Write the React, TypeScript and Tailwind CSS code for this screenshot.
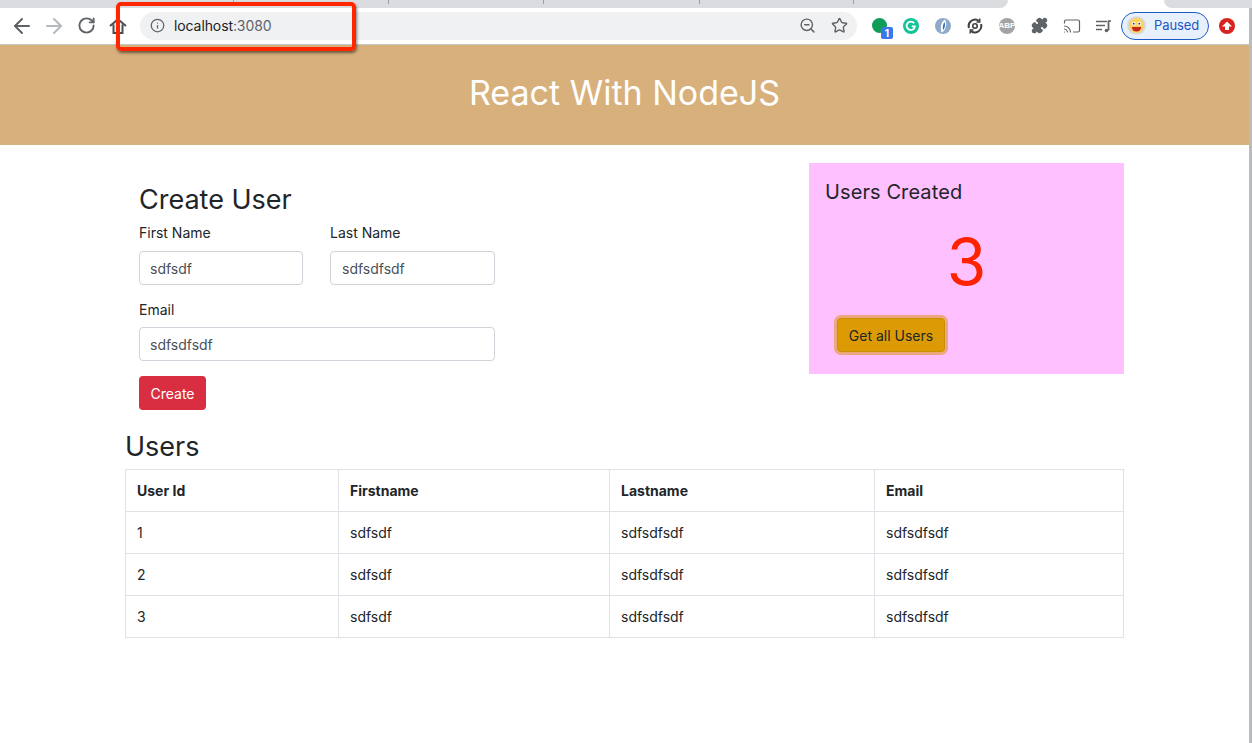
import { ArrowLeft, ArrowRight, Cast, Info, Puzzle, RotateCw, Star, ZoomOut } from 'lucide-react';

const USERS = [
  { id: 1, first: 'sdfsdf', last: 'sdfsdfsdf', email: 'sdfsdfsdf' },
  { id: 2, first: 'sdfsdf', last: 'sdfsdfsdf', email: 'sdfsdfsdf' },
  { id: 3, first: 'sdfsdf', last: 'sdfsdfsdf', email: 'sdfsdfsdf' },
];

function TabStrip() {
  return (
    <div className="flex h-[8px] bg-white">
      <div className="flex h-full w-[1008px] items-start rounded-br-lg bg-[#dadce0]">
        <div className="h-[4px] w-[234px] border-r border-[#9aa0a6]" />
        <div className="h-[4px] w-[155px] border-r border-[#9aa0a6]" />
        <div className="h-[4px] w-[155px] border-r border-[#9aa0a6]" />
        <div className="h-[4px] w-[156px] border-r border-[#9aa0a6]" />
        <div className="h-[4px] w-[154px] border-r border-[#9aa0a6]" />
      </div>
      <div className="w-[156px]" />
      <div className="flex-1 rounded-bl-lg bg-[#dadce0]" />
    </div>
  );
}

function Extensions() {
  return (
    <div className="flex items-center">
      <div className="relative ml-[15px] h-[15px] w-[15px] rounded-full bg-[#0f9d58]">
        <span className="absolute left-[9px] top-[9px] flex h-[12px] w-[12px] items-center justify-center rounded-[2px] bg-[#3b78e7] text-[10px] font-bold leading-none text-white">
          1
        </span>
      </div>
      <div className="ml-[16px] flex h-[16px] w-[16px] items-center justify-center rounded-full bg-[#15c39a]">
        <svg viewBox="0 0 16 16" className="h-[16px] w-[16px]" fill="none" stroke="#fff" strokeWidth="1.8">
          <path d="M11.2 5.2A4.2 4.2 0 1 0 12 8.4H8.8" />
        </svg>
      </div>
      <svg viewBox="0 0 16 16" className="ml-[16px] h-[16px] w-[16px]">
        <circle cx="8" cy="8" r="8" fill="#8fa9c9" />
        <path d="M10 1.5C6 4 5 9 6.5 14.5 10.5 13 12.5 6 10 1.5Z" fill="#fff" />
        <path d="M9.5 4C8 6 7.5 9.5 8 12 9.8 10.5 10.6 6.5 9.5 4Z" fill="#2f6fb5" />
      </svg>
      <svg viewBox="0 0 16 16" className="ml-[16px] h-[16px] w-[16px]" fill="none" stroke="#3c4043" strokeWidth="2">
        <path d="M2 10A6.5 6.5 0 0 1 12 2.8" />
        <path d="M14 6A6.5 6.5 0 0 1 4 13.2" />
        <path d="M12.8 0.5V4H9.5M3.2 15.5V12H6.5" strokeWidth="1.4" />
        <circle cx="8" cy="8" r="2.2" strokeWidth="1.6" />
      </svg>
      <div className="ml-[16px] flex h-[16px] w-[16px] items-center justify-center rounded-full bg-[#a3a3a3] font-['Liberation_Sans',sans-serif] text-[8px] font-bold leading-none text-white">
        ABP
      </div>
      <Puzzle className="ml-[16px] h-[17px] w-[17px] fill-[#5f6368] text-[#5f6368]" />
      <Cast className="ml-[15px] h-[18px] w-[18px] text-[#5f6368]" strokeWidth={1.6} />
      <svg viewBox="0 0 17 16" className="ml-[14px] h-[16px] w-[17px]" fill="none" stroke="#5f6368" strokeWidth="1.4">
        <path d="M1 3.5H12M1 7.5H10M1 11.5H7" />
        <path d="M13.5 2.5V12.5" strokeWidth="1.8" />
        <circle cx="11.5" cy="12.5" r="1.8" fill="#5f6368" stroke="none" />
        <path d="M13.5 3H16" strokeWidth="1.6" />
      </svg>
      <div className="ml-[9px] flex h-[28px] w-[88px] items-center rounded-full border border-[#1a5bc4] bg-[#e8f0fe] pl-[5px]">
        <div className="flex h-[19px] w-[19px] items-center justify-center rounded-full bg-[#d9d9d9] text-[14px] leading-none">
          <svg viewBox="0 0 16 16" className="h-[15px] w-[15px]">
            <circle cx="8" cy="8" r="8" fill="#fbd35a" />
            <circle cx="5" cy="6" r="2" fill="#fff" />
            <circle cx="11" cy="6" r="2" fill="#fff" />
            <circle cx="5" cy="6" r="1" fill="#333" />
            <circle cx="11" cy="6" r="1" fill="#333" />
            <path d="M3 9.5h10A5 5 0 0 1 3 9.5Z" fill="#c22" />
          </svg>
        </div>
        <span className="ml-[8px] text-[13px] tracking-[-0.1px] text-[#1a56c4]">Paused</span>
      </div>
      <div className="ml-[10px] flex h-[16px] w-[16px] items-center justify-center rounded-full bg-[#d9231f]">
        <svg viewBox="0 0 10 10" className="h-[10px] w-[10px]" fill="#fff">
          <path d="M5 0.5 10 5.5H7V9H3V5.5H0Z" />
        </svg>
      </div>
    </div>
  );
}

function Toolbar() {
  return (
    <div className="flex h-[37px] items-center border-b border-[#c4c6ca] bg-white pb-[1px] pl-[10px]">
      <div className="flex w-[96px] gap-[8px]">
        <ArrowLeft className="h-[24px] w-[24px] text-[#5f6368]" strokeWidth={2} />
        <ArrowRight className="h-[24px] w-[24px] text-[#b6b9bd]" strokeWidth={2} />
        <div className="flex h-[24px] w-[24px] items-center justify-center">
          <RotateCw className="h-[19px] w-[19px] text-[#5f6368]" strokeWidth={2.4} />
        </div>
      </div>
      <svg viewBox="0 0 18 16" className="ml-[3px] h-[16px] w-[18px]" fill="none" stroke="#4a4d52" strokeWidth="2">
        <path d="M1 8 9 1.3 17 8M4.5 6.5V15H13.5V6.5" />
      </svg>
      <div className="ml-[13px] flex h-[28px] w-[717px] items-center rounded-full bg-[#f0f1f3] pl-[10px] pr-[9px]">
        <Info className="h-[15px] w-[15px] text-[#5f6368]" strokeWidth={2} />
        <span className="ml-[9px] text-[14px] tracking-[-0.1px] text-[#202124]">
          localhost<span className="text-[#5f6368]">:3080</span>
        </span>
        <ZoomOut className="ml-auto h-[17px] w-[17px] text-[#5f6368]" strokeWidth={2} />
        <Star className="ml-[15px] h-[17px] w-[17px] text-[#5f6368]" strokeWidth={2} />
      </div>
      <Extensions />
    </div>
  );
}

function Field({ label, value, className, inputClass }: { label: string; value: string; className: string; inputClass: string }) {
  return (
    <label className={`block ${className}`}>
      <span className="block text-[14px] leading-[21px] text-[#212529]">{label}</span>
      <input
        readOnly
        value={value}
        className={`block h-[34px] w-full rounded-[4px] border border-[#ced4da] bg-white text-[14px] text-[#495057] outline-none ${inputClass}`}
      />
    </label>
  );
}

function CreateUser() {
  return (
    <div className="pl-[14px] pt-[38px]">
      <h2 className="text-[27px] font-normal leading-[34px] text-[#212529]">Create User</h2>
      <div className="mt-[5px] flex gap-[27px]">
        <Field label="First Name" value="sdfsdf" className="w-[164px]" inputClass="mt-[8px] px-[10px]" />
        <Field label="Last Name" value="sdfsdfsdf" className="w-[165px]" inputClass="mt-[8px] px-[11px]" />
      </div>
      <Field label="Email" value="sdfsdfsdf" className="mt-[14px] w-[356px]" inputClass="mt-[7px] px-[10px]" />
      <button className="mt-[15px] block h-[34px] w-[67px] rounded-[4px] bg-[#d92e41] text-[14px] text-white">Create</button>
    </div>
  );
}

function UsersCard() {
  return (
    <div className="mt-[18px] h-[211px] w-[315px] bg-[#ffc0ff] px-[16px] pt-[14px]">
      <h4 className="text-[20px] font-normal leading-[30px] tracking-[0.1px] text-[#212529]">Users Created</h4>
      <div className="mt-[16px] text-center text-[64px] leading-[77px] text-[#ff2200]">3</div>
      <button className="ml-[12px] mt-[18px] h-[34px] w-[108px] rounded-[4px] border border-[#c98f06] bg-[#dc9b05] text-[14px] text-[#212529] shadow-[0_0_0_3px_#eea67c]">
        Get all Users
      </button>
    </div>
  );
}

function UsersTable() {
  const th = 'border border-[#dee2e6] px-[11px] text-left font-bold';
  const td = 'border border-[#dee2e6] px-[11px] font-normal';
  return (
    <table className="w-[999px] table-fixed border-collapse text-[14px] text-[#212529]">
      <colgroup>
        <col className="w-[213px]" />
        <col className="w-[271px]" />
        <col className="w-[265px]" />
        <col />
      </colgroup>
      <thead>
        <tr className="h-[42px]">
          <th className={th}>User Id</th>
          <th className={th}>Firstname</th>
          <th className={th}>Lastname</th>
          <th className={th}>Email</th>
        </tr>
      </thead>
      <tbody>
        {USERS.map((user) => (
          <tr key={user.id} className="h-[42px]">
            <td className={td}>{user.id}</td>
            <td className={td}>{user.first}</td>
            <td className={td}>{user.last}</td>
            <td className={td}>{user.email}</td>
          </tr>
        ))}
      </tbody>
    </table>
  );
}

export default function App() {
  return (
    <div className="relative h-[743px] w-[1252px] overflow-hidden bg-white font-['Inter',sans-serif]">
      <TabStrip />
      <Toolbar />
      <header className="flex h-[100px] w-[1249px] items-center justify-center bg-[#d8b07c] pb-[5px]">
        <h1 className="text-[34px] font-normal text-white">React With NodeJS</h1>
      </header>
      <main className="ml-[125px] w-[999px]">
        <div className="flex justify-between">
          <CreateUser />
          <UsersCard />
        </div>
        <h3 className="mt-[20px] text-[27px] font-normal leading-[34px] text-[#212529]">Users</h3>
        <div className="mt-[5px]">
          <UsersTable />
        </div>
      </main>
      {/* annotation box drawn over the screenshot */}
      <div className="absolute left-[116px] top-[2px] h-[49px] w-[240px] rounded-[5px] border-[4px] border-[#ff2600] shadow-[1px_2px_3px_rgba(0,0,0,0.5)]" />
      <div className="absolute right-0 top-[8px] h-[735px] w-[3px] bg-[#b9bbbd]" />
    </div>
  );
}
